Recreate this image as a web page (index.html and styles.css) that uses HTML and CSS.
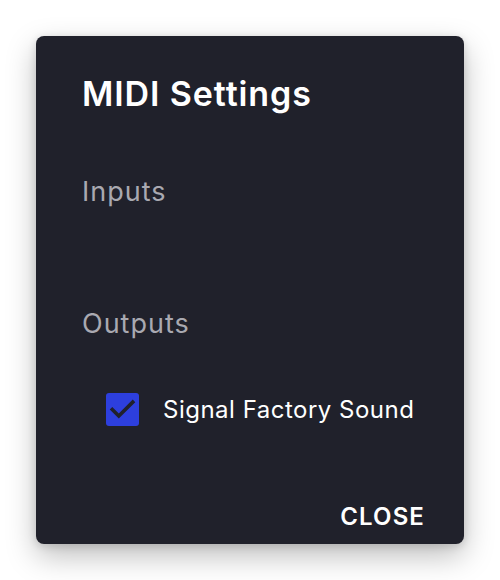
FILE: index.html
```html
<!DOCTYPE html>
<html lang="en">
<head>
<meta charset="utf-8">
<title>MIDI Settings</title>
<link rel="stylesheet" href="styles.css">
</head>
<body>
  <div class="dialog">
    <h1 class="title">MIDI Settings</h1>
    <section class="group group-inputs">
      <h2 class="group-label">Inputs</h2>
    </section>
    <section class="group group-outputs">
      <h2 class="group-label">Outputs</h2>
      <label class="item">
        <span class="checkbox">
          <svg viewBox="0 0 33 33" width="33" height="33" aria-hidden="true">
            <polyline points="5,15.2 12.8,23 28,7.9" fill="none" stroke="#20212b" stroke-width="3.6" stroke-linecap="butt" stroke-linejoin="miter"/>
          </svg>
        </span>
        <span class="item-text">Signal Factory Sound</span>
      </label>
    </section>
    <div class="actions">
      <button class="btn">CLOSE</button>
    </div>
  </div>
</body>
</html>
```

FILE: styles.css
```css
html, body {
  margin: 0;
  padding: 0;
  background: #ffffff;
}
body {
  width: 500px;
  height: 580px;
  padding: 36px;
  box-sizing: border-box;
  font-family: Inter, "Noto Sans", sans-serif;
}
.dialog {
  width: 428px;
  height: 508px;
  box-sizing: border-box;
  background: #20212b;
  border-radius: 8px;
  box-shadow: 0 12px 30px rgba(0, 0, 0, 0.26), 0 2px 8px rgba(0, 0, 0, 0.14);
  padding: 38px 46px 0 46px;
  display: flex;
  flex-direction: column;
}
.title {
  margin: 0;
  font-size: 34px;
  font-weight: 600;
  line-height: 40px;
  color: #ffffff;
  letter-spacing: 0.9px;
}
.group-label {
  margin: 0;
  font-size: 27px;
  font-weight: 400;
  line-height: 32px;
  color: #a9a9b1;
  letter-spacing: 1px;
}
.group-inputs {
  margin-top: 62px;
  height: 132px;
}
.item {
  display: flex;
  align-items: center;
  gap: 24px;
  margin-top: 53px;
  margin-left: 24px;
}
.checkbox {
  width: 33px;
  height: 33px;
  border-radius: 3px;
  background: #2d3fdd;
  display: flex;
  flex: none;
}
.item-text {
  font-size: 24px;
  line-height: 32px;
  color: #ffffff;
  letter-spacing: 0.5px;
}
.actions {
  margin-top: auto;
  display: flex;
  justify-content: flex-end;
  padding-bottom: 11px;
  margin-right: -7px;
}
.btn {
  background: none;
  border: none;
  padding: 0;
  font-family: inherit;
  font-size: 24px;
  font-weight: 600;
  line-height: 32px;
  color: #ffffff;
  letter-spacing: 1.1px;
}
```
